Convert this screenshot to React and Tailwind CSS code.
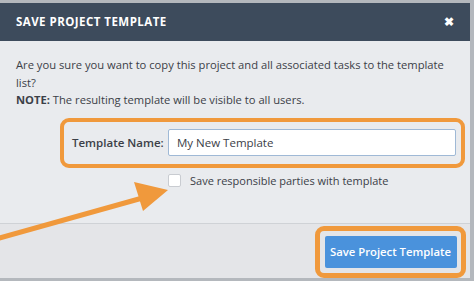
import React from "react";

const font = { fontFamily: "'Open Sans', 'Noto Sans', Arial, sans-serif" };

function Arrow() {
  return (
    <svg
      className="absolute left-0 top-0 pointer-events-none"
      width="200"
      height="250"
      viewBox="0 0 200 250"
    >
      <line x1="-4" y1="239" x2="146" y2="197" stroke="#f0993c" strokeWidth="5" />
      <polygon points="134,182 168,190 143,211" fill="#f0993c" />
    </svg>
  );
}

export default function App() {
  return (
    <div
      className="relative w-[474px] h-[281px] bg-[#b4b8bd] pt-[3px] overflow-hidden"
      style={font}
    >
      <div className="w-[470px] h-[275px] flex flex-col">
        {/* Header */}
        <div className="h-[38px] bg-[#3d4b5c] flex items-center justify-between pl-4 pr-[16px]">
          <h2 className="text-white text-[11.5px] font-bold tracking-[0.04em] uppercase">
            Save Project Template
          </h2>
          <span className="text-white text-[12px] font-bold leading-none">✖</span>
        </div>

        {/* Body */}
        <div className="flex-1 bg-[#e9ebee] pt-[15px] px-4 text-[#3b4047] border-b border-[#cfd2d6]">
          <p className="text-[11.2px] leading-[17.5px]">
            Are you sure you want to copy this project and all associated tasks to the template list?
          </p>
          <p className="text-[11.2px] leading-[17.5px]">
            <span className="font-bold">NOTE:</span> The resulting template will be visible to all users.
          </p>

          <div className="ml-[44px] mt-[9px] w-[405px] h-[50px] border-[4px] border-[#f0993c] rounded-[9px] flex items-center pl-[8px]">
            <label className="text-[11.5px] font-semibold w-[96px]">Template Name:</label>
            <div className="w-[288px] h-[27px] bg-white border border-[#9fb9d6] rounded-[2px] flex items-center pl-[8px] text-[11.5px]">
              My New Template
            </div>
          </div>

          <div className="ml-[152px] mt-[5px] flex items-center gap-[9px]">
            <div className="w-[13px] h-[13px] bg-white border border-[#c9ccd1] rounded-[2px]" />
            <span className="text-[11px]">Save responsible parties with template</span>
          </div>
        </div>

        {/* Footer */}
        <div className="h-[54px] bg-[#e4e5e8] flex items-end justify-end pr-[4px]">
          <div className="w-[151px] h-[52px] border-[5px] border-[#f0993c] rounded-[9px] flex items-center justify-center">
            <button className="w-[132px] h-[32px] bg-[#4a92dc] text-white text-[11.3px] font-semibold rounded-[2px]">
              Save Project Template
            </button>
          </div>
        </div>
      </div>
      <Arrow />
    </div>
  );
}
